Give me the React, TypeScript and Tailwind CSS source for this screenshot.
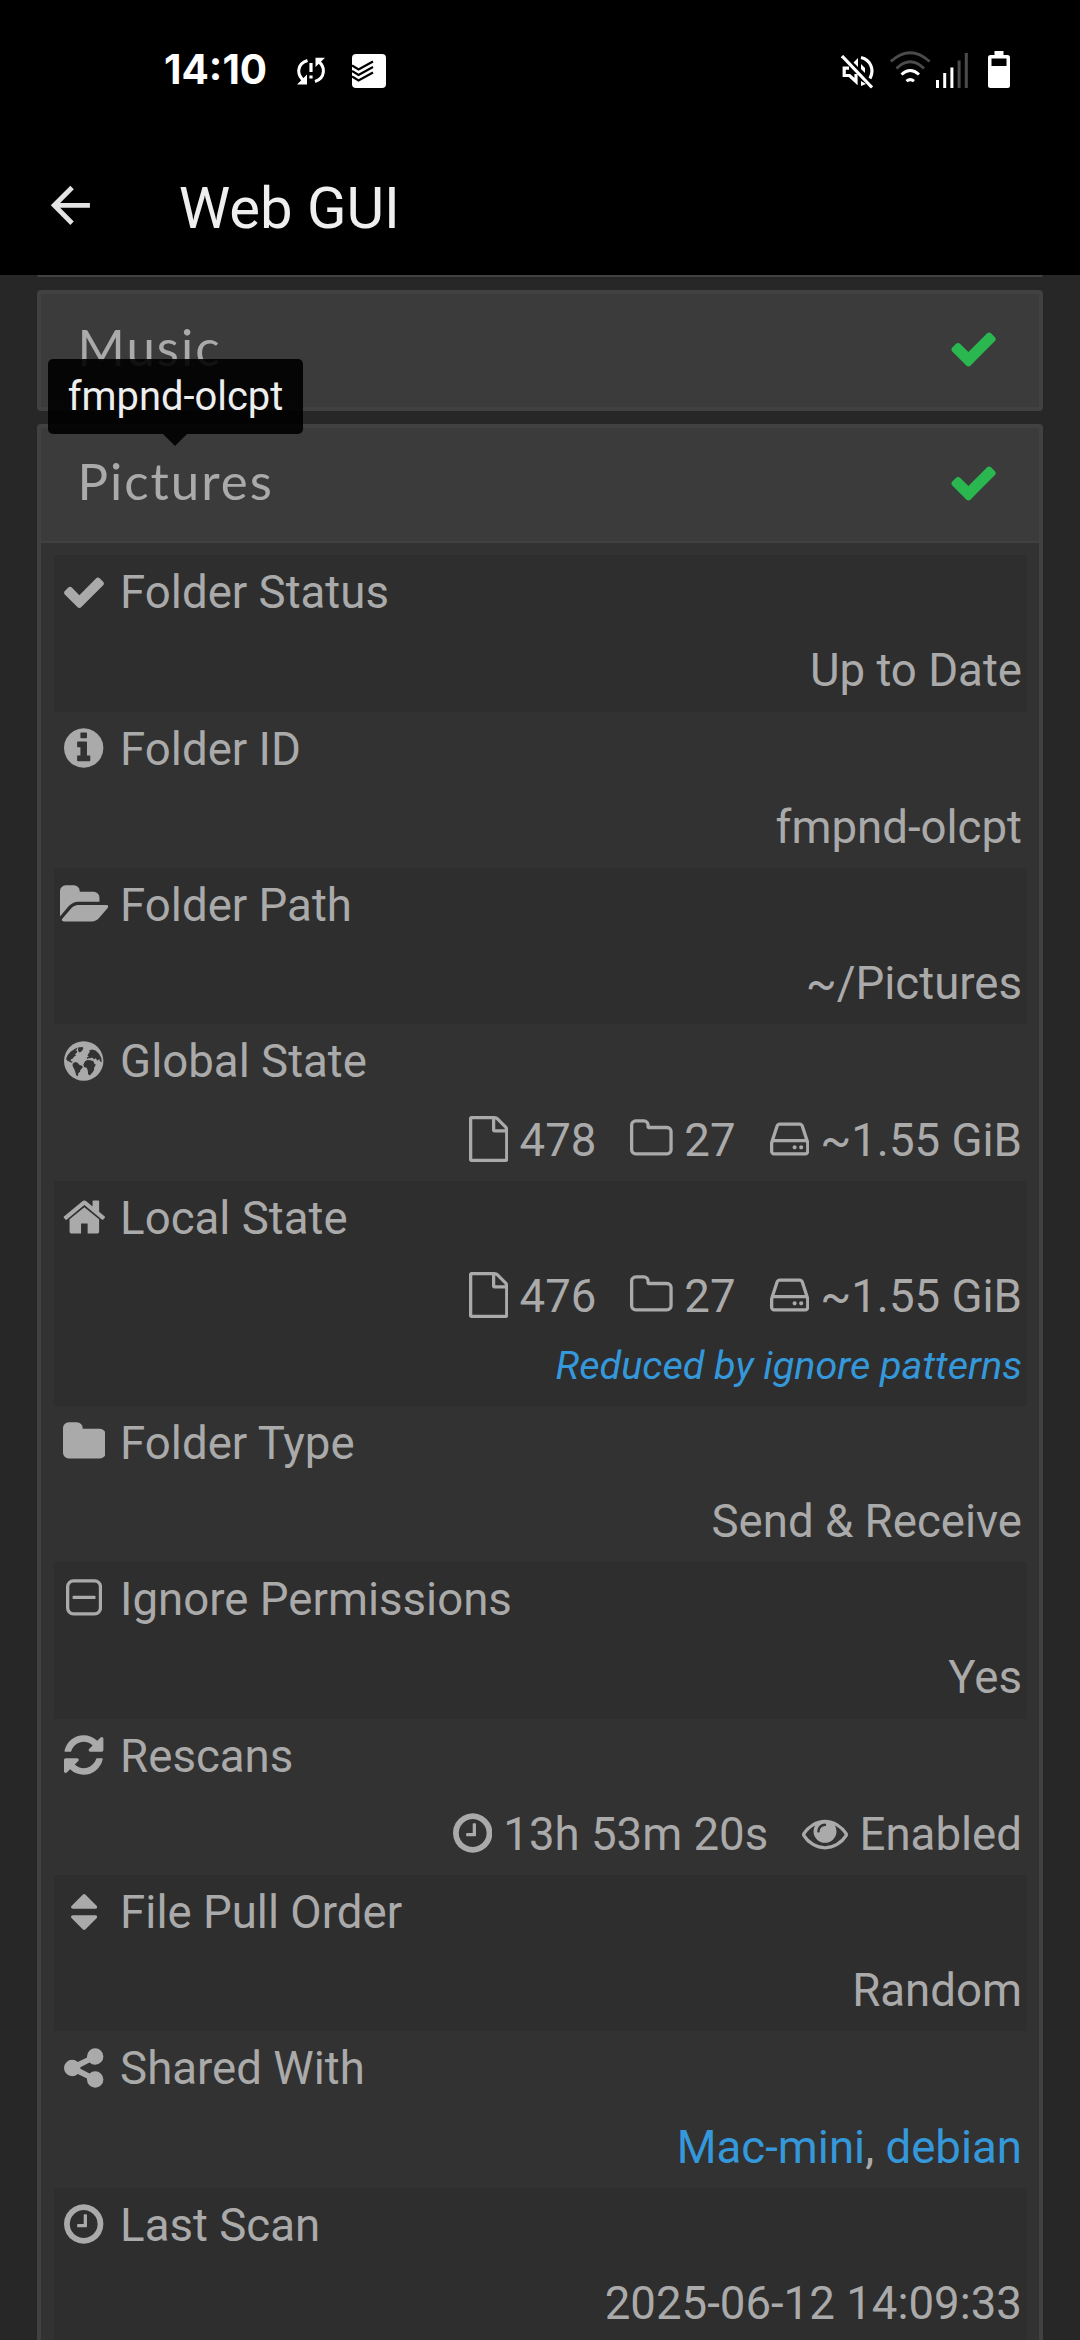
import type { ReactNode } from "react";

type Glyph = { box: string; w: string; d: string };

/* 1792-unit glyph grid, 46px tall; the width class follows each glyph's advance. */
const G: Record<string, Glyph> = {
  check: { box: "0 0 1792 1792", w: "w-[46px]", d: "M1671 566q0 40-28 68l-724 724-136 136q-28 28-68 28t-68-28l-136-136-362-362q-28-28-28-68t28-68l136-136q28-28 68-28t68 28l294 295 656-657q28-28 68-28t68 28l136 136q28 28 28 68z" },
  info: { box: "128 0 1536 1792", w: "w-[39.4px]", d: "M1152 1376v-160q0-14-9-23t-23-9h-96v-512q0-14-9-23t-23-9h-320q-14 0-23 9t-9 23v160q0 14 9 23t23 9h96v320h-96q-14 0-23 9t-9 23v160q0 14 9 23t23 9h448q14 0 23-9t9-23zm-128-896v-160q0-14-9-23t-23-9h-192q-14 0-23 9t-9 23v160q0 14 9 23t23 9h192q14 0 23-9t9-23zm640 416q0 209-103 385.5t-279.5 279.5-385.5 103-385.5-103-279.5-279.5-103-385.5 103-385.5 279.5-279.5 385.5-103 385.5 103 279.5 279.5 103 385.5z" },
  folderOpen: { box: "0 0 1920 1792", w: "w-[49.3px]", d: "M1879 952q0 31-31 66l-336 396q-43 51-120.5 86.5t-143.5 35.5h-1088q-34 0-60.5-13t-26.5-43q0-31 31-66l336-396q43-51 120.5-86.5t143.5-35.5h1088q34 0 60.5 13t26.5 43zm-343-344v160h-832q-94 0-197 47.5t-164 119.5l-337 396-5 6q0-4-.5-12.5t-.5-12.5v-960q0-92 66-158t158-66h320q92 0 158 66t66 158v32h544q92 0 158 66t66 158z" },
  folder: { box: "64 0 1664 1792", w: "w-[42.7px]", d: "M1728 608v704q0 92-66 158t-158 66h-1216q-92 0-158-66t-66-158v-960q0-92 66-158t158-66h320q92 0 158 66t66 158v32h672q92 0 158 66t66 158z" },
  folderO: { box: "64 0 1664 1792", w: "w-[42.7px]", d: "M1600 1312v-704q0-40-28-68t-68-28h-704q-40 0-68-28t-28-68v-64q0-40-28-68t-68-28h-320q-40 0-68 28t-28 68v960q0 40 28 68t68 28h1216q40 0 68-28t28-68zm128-704v704q0 92-66 158t-158 66h-1216q-92 0-158-66t-66-158v-960q0-92 66-158t158-66h320q92 0 158 66t66 158v32h672q92 0 158 66t66 158z" },
  home: { box: "64 0 1664 1792", w: "w-[42.7px]", d: "M1472 992v480q0 26-19 45t-45 19h-384v-384h-256v384h-384q-26 0-45-19t-19-45v-480q0-1 .5-3t.5-3l575-474 575 474q1 2 1 6zm223-69l-62 74q-8 9-21 11h-3q-13 0-21-7l-692-577-692 577q-12 8-24 7-13-2-21-11l-62-74q-8-10-7-23.5t11-21.5l719-599q32-26 76-26t76 26l244 204v-195q0-14 9-23t23-9h192q14 0 23 9t9 23v408l219 182q10 8 11 21.5t-7 23.5z" },
  refresh: { box: "128 0 1536 1792", w: "w-[39.4px]", d: "M1639 1056q0 5-1 7-64 268-268 434.5t-478 166.5q-146 0-282.5-55t-243.5-157l-129 129q-19 19-45 19t-45-19-19-45v-448q0-26 19-45t45-19h448q26 0 45 19t19 45-19 45l-137 137q71 66 161 102t187 36q134 0 250-65t186-179q11-17 53-117 8-23 30-23h192q13 0 22.5 9.5t9.5 22.5zm25-800v448q0 26-19 45t-45 19h-448q-26 0-45-19t-19-45 19-45l138-138q-148-137-349-137-134 0-250 65t-186 179q-11 17-53 117-8 23-30 23h-199q-13 0-22.5-9.5t-9.5-22.5v-7q65-268 270-434.5t480-166.5q146 0 284 55.5t245 156.5l130-129q19-19 45-19t45 19 19 45z" },
  sort: { box: "384 0 1024 1792", w: "w-[26.3px]", d: "M1408 1088q0 26-19 45l-448 448q-19 19-45 19t-45-19l-448-448q-19-19-19-45t19-45 45-19h896q26 0 45 19t19 45zm0-384q0 26-19 45t-45 19h-896q-26 0-45-19t-19-45 19-45l448-448q19-19 45-19t45 19l448 448q19 19 19 45z" },
  share: { box: "128 0 1536 1792", w: "w-[39.4px]", d: "M1344 1024q133 0 226.5 93.5t93.5 226.5-93.5 226.5-226.5 93.5-226.5-93.5-93.5-226.5q0-12 2-34l-360-180q-92 86-218 86-133 0-226.5-93.5t-93.5-226.5 93.5-226.5 226.5-93.5q126 0 218 86l360-180q-2-22-2-34 0-133 93.5-226.5t226.5-93.5 226.5 93.5 93.5 226.5-93.5 226.5-226.5 93.5q-126 0-218-86l-360 180q2 22 2 34t-2 34l360 180q92-86 218-86z" },
  clock: { box: "128 0 1536 1792", w: "w-[39.4px]", d: "M1024 544v448q0 14-9 23t-23 9h-320q-14 0-23-9t-9-23v-64q0-14 9-23t23-9h224v-352q0-14 9-23t23-9h64q14 0 23 9t9 23zm416 352q0-148-73-273t-198-198-273-73-273 73-198 198-73 273 73 273 198 198 273 73 273-73 198-198 73-273zm224 0q0 209-103 385.5t-279.5 279.5-385.5 103-385.5-103-279.5-279.5-103-385.5 103-385.5 279.5-279.5 385.5-103 385.5 103 279.5 279.5 103 385.5z" },
  eye: { box: "0 0 1792 1792", w: "w-[46px]", d: "M1664 960q-152-236-381-353 61 104 61 225 0 185-131.5 316.5t-316.5 131.5-316.5-131.5-131.5-316.5q0-121 61-225-229 117-381 353 133 205 333.5 326.5t434.5 121.5 434.5-121.5 333.5-326.5zm-720-384q0-20-14-34t-34-14q-125 0-214.5 89.5t-89.5 214.5q0 20 14 34t34 14 34-14 14-34q0-86 61-147t147-61q20 0 34-14t14-34zm848 384q0 34-20 69-140 230-376.5 368.5t-499.5 138.5-499.5-139-376.5-368q-20-35-20-69t20-69q140-229 376.5-368t499.5-139 499.5 139 376.5 368q20 35 20 69z" },
  hdd: { box: "128 0 1536 1792", w: "w-[39.4px]", d: "M1168 1216q0 33-23.5 56.5t-56.5 23.5-56.5-23.5-23.5-56.5 23.5-56.5 56.5-23.5 56.5 23.5 23.5 56.5zm256 0q0 33-23.5 56.5t-56.5 23.5-56.5-23.5-23.5-56.5 23.5-56.5 56.5-23.5 56.5 23.5 23.5 56.5zm112 160v-320q0-13-9.5-22.5t-22.5-9.5h-1216q-13 0-22.5 9.5t-9.5 22.5v320q0 13 9.5 22.5t22.5 9.5h1216q13 0 22.5-9.5t9.5-22.5zm-1230-480h1180l-157-482q-4-13-16-21.5t-26-8.5h-782q-14 0-26 8.5t-16 21.5zm1358 160v320q0 66-47 113t-113 47h-1216q-66 0-113-47t-47-113v-320q0-25 16-75l197-606q17-53 63-86t101-33h782q55 0 101 33t63 86l197 606q16 50 16 75z" },
  file: { box: "128 0 1536 1792", w: "w-[39.4px]", d: "M1596 380q28 28 48 76t20 88v1152q0 40-28 68t-68 28h-1344q-40 0-68-28t-28-68v-1600q0-40 28-68t68-28h896q40 0 88 20t76 48zm-444-244v376h376q-10-29-22-41l-313-313q-12-12-41-22zm384 1528v-1024h-416q-40 0-68-28t-28-68v-416h-768v1536h1280z" },
  minusSquare: { box: "192 0 1408 1792", w: "w-[36.1px]", d: "M1344 800v64q0 14-9 23t-23 9h-832q-14 0-23-9t-9-23v-64q0-14 9-23t23-9h832q14 0 23 9t9 23zm128 448v-832q0-66-47-113t-113-47h-832q-66 0-113 47t-47 113v832q0 66 47 113t113 47h832q66 0 113-47t47-113zm128-832v832q0 119-84.5 203.5t-203.5 84.5h-832q-119 0-203.5-84.5t-84.5-203.5v-832q0-119 84.5-203.5t203.5-84.5h832q119 0 203.5 84.5t84.5 203.5z" },
};

function Icon({ name }: { name: string }) {
  const g = G[name];
  return (
    <svg className={`inline h-[46px] align-[-6.6px] ${g.w}`} viewBox={g.box} fill="currentColor">
      <path d={g.d} />
    </svg>
  );
}

function GlobeIcon() {
  return (
    <svg className="inline h-[46px] w-[39.4px] align-[-6.6px]" viewBox="128 0 1536 1792" fill="currentColor">
      <g transform="translate(-150 -123.5) scale(13.24)">
        <circle cx="79" cy="77" r="58" />
        <g fill="#323232">
          <path d="M31 76 27 71 32 59 41 49 55 40 60 38 59 43 54 46 60 47 59 53 53 57 57 61 51 64 47 70 42 72 40 76 47 79 44 82Z" />
          <path d="M62 37 76 36 78 40 73 48 67 52 63 48Z" />
          <path d="M47 84 54 80 61 82 66 88 75 92 76 97 70 102 68 109 63 113 62 122 57 119 53 105 49 97 46 90Z" />
          <path d="M92 57 97 50 95 46 103 43 114 46 124 56 131 68 132 81 127 78 125 71 119 76 115 69 109 72 104 67 99 69 94 69 88 71 89 66 94 64 90 61Z" />
          <path d="M83 78 90 74 99 75 107 77 111 86 115 88 110 96 109 105 103 113 97 120 92 116 91 105 88 97 80 95 78 87Z" />
        </g>
      </g>
    </svg>
  );
}

function Row({ icon, label, dark, children, note }: { icon: ReactNode; label: string; dark?: boolean; children: ReactNode; note?: string }) {
  return (
    <div className={`pr-[5px] pl-[5.5px] ${dark ? "bg-[#2e2e2e]" : ""}`}>
      <div className="h-[78.2px] leading-[75.2px] whitespace-nowrap">
        <span className="inline-block w-[49.3px] text-center">{icon}</span>
        {"\u00a0"}
        {label}
      </div>
      <div className="h-[78.2px] text-right leading-[75.2px] whitespace-nowrap">{children}</div>
      {note && <div className="h-[68.8px] text-right text-[39.6px] leading-[57px] text-[#3498db] italic">{note}</div>}
    </div>
  );
}

function State({ files }: { files: string }) {
  return (
    <>
      <Icon name="file" />
      {`\u00a0${files}\u00a0\u00a0\u00a0`}
      <Icon name="folderO" />
      {"\u00a027\u00a0\u00a0\u00a0"}
      <Icon name="hdd" />
      {"\u00a0~1.55 GiB"}
    </>
  );
}

function Heading({ title }: { title: string }) {
  return (
    <div className="flex h-[113px] items-center justify-between bg-[#3b3b3b] pr-[40px] pb-[3.5px] pl-[36.5px]">
      <span className="font-['Lato',sans-serif] text-[51px] leading-[108px] tracking-[2px]">
        <span className="mt-[-3px] block">{title}</span>
      </span>
      <svg className="size-[51.2px] text-[#2ab750]" viewBox="0 0 1792 1792" fill="currentColor">
        <path d={G.check.d} />
      </svg>
    </div>
  );
}

function StatusBar() {
  return (
    <div className="flex h-[138px] justify-between pr-[70px] pl-[164px] text-white">
      <div className="flex">
        <span className="mt-[45.5px] w-[104px] font-['Inter',sans-serif] text-[40.5px] leading-[48px] font-bold whitespace-nowrap">14:10</span>
        <svg className="mt-[57px] ml-[29px] h-[28px] w-[28px]" viewBox="0 0 28 28" fill="none" stroke="currentColor" strokeWidth="3">
          <path d="M10.5 3.5C-.5 7-.5 18 7 23.500M18 24.500C28.500 21 28.500 10 21.500 4.500" />
          <path d="M0 27.500H10V17.500ZM28 .8H18.500V10Z" fill="currentColor" stroke="none" />
          <path d="M14 6V15M14 18.500V21.500" strokeWidth="3.200" />
        </svg>
        <svg className="mt-[54px] ml-[27px] h-[34px] w-[34px]" viewBox="0 0 34 34" fill="none" stroke="#000" strokeWidth="2.200">
          <rect width="34" height="34" rx="4" fill="#fff" stroke="none" />
          <path d="M0 11.500 6.500 15.500 21 7.500M0 17 6.500 21 21 13M0 22.500 6.500 26.500 21 18.500" />
        </svg>
      </div>
      <div className="flex">
        <svg className="mt-[55px] h-[34px] w-[33px]" viewBox="0 0 33 34" fill="none" stroke="currentColor" strokeWidth="3.200">
          <path d="M1 1 31 32.500" />
          <path d="M8 13.200H3.200V20.500H8.500L15 26.500V19" />
          <path d="M12.500 7.500 17 3V12Z" fill="currentColor" stroke="none" />
          <path d="M20 2.500C30 5 33.500 15 29 23.500" />
          <path d="M20 9 24 13V18L20 14ZM20 26 25 29 20 31Z" fill="currentColor" stroke="none" />
        </svg>
        <svg className="mt-[51px] ml-[15.500px] h-[33px] w-[42px]" viewBox="0 0 42 33" fill="none" strokeWidth="2.800" stroke="#fff">
          <path d="M.8 10.500Q20.200-7 39.600 10.500M6.500 17.500Q20.200 4 34 17.500" stroke="#4b4b4b" />
          <path d="M11.500 23.500Q20.200 15.500 29 23.500M16.500 30.200Q20.200 27 24 30.200" strokeWidth="3" />
        </svg>
        <svg className="mt-[53px] ml-[4.500px] h-[35px] w-[33px]" viewBox="0 0 33 35" fill="#fff">
          <rect x="0" y="27" width="3" height="8" />
          <rect x="7.200" y="20" width="3" height="15" />
          <rect x="14.400" y="14.500" width="3" height="20.500" />
          <rect x="21.600" y="7.500" width="3" height="27.500" fill="#4b4b4b" />
          <rect x="28.800" y="0" width="3" height="35" fill="#4b4b4b" />
        </svg>
        <svg className="mt-[51px] ml-[19px] h-[37px] w-[22px]" viewBox="0 0 22 37" fill="#fff">
          <path d="M6.500 0H15.500V4H19.500Q22 4 22 6.500V34.500Q22 37 19.500 37H2.500Q0 37 0 34.500V6.500Q0 4 2.500 4H6.500Z" />
          <rect x="3.500" y="7.500" width="15" height="7.500" fill="#000" />
        </svg>
      </div>
    </div>
  );
}

export default function App() {
  return (
    <div className="flex h-[2340px] w-[1080px] flex-col overflow-hidden bg-[#272727] font-['Roboto',sans-serif] text-[45.6px] text-[#aaaaaa]">
      <header className="h-[275px] shrink-0 bg-black">
        <StatusBar />
        <div className="flex h-[135px] items-center">
          <svg className="ml-[40.500px] size-[58.700px] text-[#e3e3e3]" viewBox="0 0 24 24" fill="currentColor">
            <path d="M20 11H7.830l5.590-5.590L12 4l-8 8 8 8 1.410-1.410L7.830 13H20v-2z" />
          </svg>
          <h1 className="ml-[79.500px] pt-[5px] text-[58px] leading-[70px] text-[#efefef]">Web GUI</h1>
        </div>
      </header>

      <main className="px-[37px]">
        <div className="h-[2px] rounded-b-[2px] bg-[#424242]" />

        <section className="mt-[13px] rounded-[4px] border-4 border-[#414141]">
          <Heading title="Music" />
        </section>

        <section className="relative mt-[13px] rounded-[4px] border-4 border-[#414141] bg-[#323232]">
          <Heading title="Pictures" />
          <div className="border-t-2 border-[#414141] pt-[12.200px] pr-[12px] pl-[13px]">
            <Row dark icon={<Icon name="check" />} label="Folder Status">Up to Date</Row>
            <Row icon={<Icon name="info" />} label="Folder ID">fmpnd-olcpt</Row>
            <Row dark icon={<Icon name="folderOpen" />} label="Folder Path">~/Pictures</Row>
            <Row icon={<GlobeIcon />} label="Global State"><State files="478" /></Row>
            <Row dark icon={<Icon name="home" />} label="Local State" note="Reduced by ignore patterns"><State files="476" /></Row>
            <Row icon={<Icon name="folder" />} label="Folder Type">Send &amp; Receive</Row>
            <Row dark icon={<Icon name="minusSquare" />} label="Ignore Permissions">Yes</Row>
            <Row icon={<Icon name="refresh" />} label="Rescans">
              <Icon name="clock" />
              {"\u00a013h 53m 20s\u00a0\u00a0\u00a0"}
              <Icon name="eye" />
              {"\u00a0Enabled"}
            </Row>
            <Row dark icon={<Icon name="sort" />} label="File Pull Order">Random</Row>
            <Row icon={<Icon name="share" />} label="Shared With">
              <span className="text-[#3498db]">Mac-mini</span>, <span className="text-[#3498db]">debian</span>
            </Row>
            <Row dark icon={<Icon name="clock" />} label="Last Scan">2025-06-12 14:09:33</Row>
          </div>

          <div className="absolute top-[-69px] left-[7px] h-[75px] w-[255px] rounded-[5px] bg-black/90 text-center text-[39.900px] leading-[75px] text-[#eeeeee]">
            fmpnd-olcpt
            <svg className="absolute top-[75px] left-[115px] h-[12px] w-[24px]" viewBox="0 0 24 12">
              <path d="M0 0H24L12 12Z" fill="#000" fillOpacity=".9" />
            </svg>
          </div>
        </section>
      </main>
    </div>
  );
}
